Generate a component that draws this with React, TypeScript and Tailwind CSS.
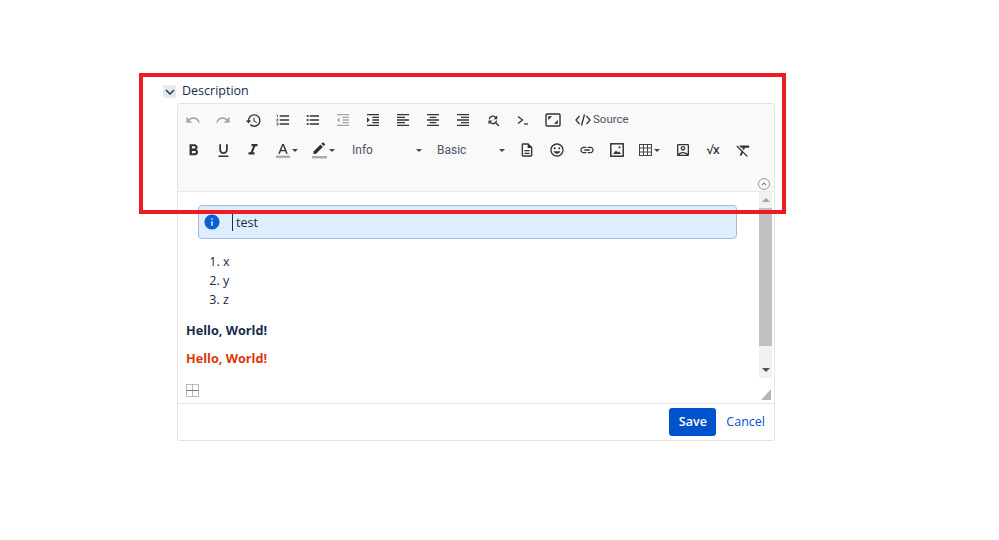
import type { ReactNode } from "react";
import {
  MdUndo, MdRedo, MdHistory, MdFormatListNumbered, MdFormatListBulleted, MdFormatIndentDecrease,
  MdFormatIndentIncrease, MdFormatAlignLeft, MdFormatAlignCenter, MdFormatAlignRight, MdFindReplace,
  MdFormatBold, MdFormatUnderlined, MdFormatItalic, MdOutlineInsertEmoticon, MdLink, MdFormatClear,
  MdInfo, MdExpandMore, MdOutlineAccountBox, MdOutlineDescription, MdKeyboardArrowUp,
} from "react-icons/md";

function Btn({ children, className = "" }: { children: ReactNode; className?: string }) {
  return <div className={"flex h-[30px] w-[30px] shrink-0 items-center justify-center text-[#333333] " + className}>{children}</div>;
}

function Caret({ className = "" }: { className?: string }) {
  return <span className={"inline-block h-0 w-0 border-x-[3px] border-t-[3px] border-x-transparent border-t-[#444444] " + className} />;
}

function Terminal() {
  return (
    <svg width="14" height="14" viewBox="0 0 14 14" fill="none" stroke="#333" strokeWidth="1.3">
      <path d="M2 3.5 L6.5 7 L2 10.5" />
      <path d="M8 11 H12" />
    </svg>
  );
}

function Maximize() {
  return (
    <svg width="16" height="14" viewBox="0 0 16 14" fill="none" stroke="#333">
      <rect x="1" y="1" width="14" height="12" rx="1" strokeWidth="1.4" />
      <path d="M3.5 6.5 V3.5 H6.5 Z" fill="#333" strokeWidth="0.6" />
      <path d="M12.5 7.5 V10.5 H9.5 Z" fill="#333" strokeWidth="0.6" />
    </svg>
  );
}

function SourceIcon() {
  return (
    <svg width="16" height="14" viewBox="0 0 16 14" fill="none" stroke="#333" strokeWidth="1.3">
      <path d="M4.5 3 L1 7 L4.5 11" />
      <path d="M11.5 3 L15 7 L11.5 11" />
      <path d="M9.5 1.5 L6.5 12.5" />
    </svg>
  );
}

function ColorA() {
  return (
    <svg width="15" height="17" viewBox="0 0 15 17">
      <path d="M6.6 1.5 H8.4 L12.6 12 H10.8 L9.9 9.4 H5.1 L4.2 12 H2.4 Z M5.7 7.9 H9.3 L7.5 3.2 Z" fill="#333" fillRule="evenodd" />
      <rect x="0" y="14" width="15" height="2.4" fill="#a9a9a9" />
    </svg>
  );
}

function Pen() {
  return (
    <svg width="15" height="17" viewBox="0 0 15 17">
      <path d="M1.5 12 V9.6 L8.5 2.6 L10.9 5 L3.9 12 Z" fill="#333" />
      <path d="M9.4 1.7 L10.5 0.6 C10.8 0.3 11.2 0.3 11.5 0.6 L12.9 2 C13.2 2.3 13.2 2.7 12.9 3 L11.8 4.1 Z" fill="#333" />
      <rect x="0" y="14" width="15" height="2.4" fill="#a9a9a9" />
    </svg>
  );
}

function ImageBox() {
  return (
    <svg width="14" height="14" viewBox="0 0 14 14">
      <rect x="0.8" y="0.8" width="12.4" height="12.4" fill="none" stroke="#333" strokeWidth="1.5" />
      <path d="M3 11 L6 7.5 L7.8 9.5 L9 8.2 L11 11 Z" fill="#333" />
      <rect x="8.6" y="3.4" width="1.8" height="1.8" fill="#333" />
    </svg>
  );
}

function TableIcon() {
  return (
    <svg width="13" height="12" viewBox="0 0 13 12" fill="none" stroke="#444" strokeWidth="1">
      <rect x="0.5" y="0.5" width="12" height="11" />
      <path d="M0.5 4 H12.5 M0.5 8 H12.5 M4.5 0.5 V11.5 M8.5 0.5 V11.5" />
    </svg>
  );
}

function DottedTable() {
  return (
    <svg width="13" height="13" viewBox="0 0 13 13" fill="none" stroke="#777777" strokeWidth="1">
      <rect x="0.5" y="0.5" width="12" height="12" strokeDasharray="1 1" />
      <path d="M0.5 6.5 H12.5" />
      <path d="M6.5 0.5 V12.5" strokeDasharray="1 1" />
    </svg>
  );
}

const muted = "text-[#a8a8a8]";
const size = 16;
const label = "font-['Roboto',sans-serif] text-[12px] text-[#4a5568]";

export default function App() {
  return (
    <div className="relative h-[540px] w-[999px] overflow-hidden bg-white pl-[163px] pt-[80px] font-['Open_Sans','Noto_Sans',sans-serif] text-[12.5px] text-[#172b4d]">
      <div className="flex h-[23px] items-center">
        <span className="flex h-[13px] w-[13px] items-center justify-center rounded-[2px] bg-[#e6e8ef]">
          <MdExpandMore size={18} className="shrink-0 text-[#253858]" />
        </span>
        <span className="ml-[6px] text-[12.5px] font-medium leading-none">Description</span>
      </div>

      <div className="ml-[14px] w-[598px] rounded-[2px] border border-[#e4e5e8] bg-white">
        <div className="h-[88px] border-b border-[#e9e9e9] bg-[#f9f9f9] pt-[1px]">
          <div className="flex h-[30px] items-center">
            <Btn className={muted}><MdUndo size={size} /></Btn>
            <Btn className={muted}><MdRedo size={size} /></Btn>
            <Btn><MdHistory size={17} /></Btn>
            <Btn><MdFormatListNumbered size={size} /></Btn>
            <Btn><MdFormatListBulleted size={size} /></Btn>
            <Btn className={muted}><MdFormatIndentDecrease size={size} /></Btn>
            <Btn><MdFormatIndentIncrease size={size} /></Btn>
            <Btn><MdFormatAlignLeft size={size} /></Btn>
            <Btn><MdFormatAlignCenter size={size} /></Btn>
            <Btn><MdFormatAlignRight size={size} /></Btn>
            <Btn><MdFindReplace size={15} /></Btn>
            <Btn><Terminal /></Btn>
            <Btn><Maximize /></Btn>
            <div className={"ml-[7px] flex items-center gap-[2px] " + label}>
              <SourceIcon />
              <span className="text-[11.5px]">Source</span>
            </div>
          </div>
          <div className="flex h-[30px] items-center">
            <Btn><MdFormatBold size={19} /></Btn>
            <Btn><MdFormatUnderlined size={17} /></Btn>
            <Btn><MdFormatItalic size={18} /></Btn>
            <div className="flex w-[30px] shrink-0 items-center pl-[8px]"><ColorA /><Caret className="ml-[2px]" /></div>
            <div className="ml-[14px] flex w-[30px] shrink-0 items-center"><Pen /><Caret className="ml-[2px]" /></div>
            <div className={"ml-[10px] flex w-[72px] shrink-0 items-center justify-between pr-[2px] " + label}>
              <span>Info</span><Caret />
            </div>
            <div className={"ml-[13px] flex w-[70px] shrink-0 items-center justify-between pr-[2px] " + label}>
              <span>Basic</span><Caret />
            </div>
            <Btn className="ml-[5px]"><MdOutlineDescription size={16} /></Btn>
            <Btn><MdOutlineInsertEmoticon size={16} /></Btn>
            <Btn><MdLink size={16} /></Btn>
            <Btn><ImageBox /></Btn>
            <div className="flex w-[30px] shrink-0 items-center pl-[7px]"><TableIcon /><Caret className="ml-[2px]" /></div>
            <Btn className="ml-[6px]"><MdOutlineAccountBox size={16} /></Btn>
            <Btn><span className="text-[12px] font-semibold leading-none text-[#333333]">√x</span></Btn>
            <Btn><MdFormatClear size={17} /></Btn>
          </div>
          <div className="flex justify-end pr-[4px] pt-[13px]">
            <span className="flex h-[12px] w-[12px] items-center justify-center rounded-full border border-[#999999] text-[#777777]">
              <MdKeyboardArrowUp size={10} />
            </span>
          </div>
        </div>

        <div className="flex h-[186px]">
          <div className="min-w-0 flex-1 pt-[13px]">
            <div className="ml-[20px] flex h-[34px] w-[539px] items-center rounded-[4px] border border-[#a4bcd6] bg-[#dfeeff] pl-[4px]">
              <MdInfo size={18} className="text-[#0b5fd0]" />
              <span className="ml-[11px] h-[17px] w-px bg-[#172b4d]" />
              <span className="ml-[3px] leading-[17px]">test</span>
            </div>
            <ol className="ml-[45px] mt-[13px] list-decimal pl-0 leading-[19px]">
              <li>x</li>
              <li>y</li>
              <li>z</li>
            </ol>
            <p className="ml-[8px] mt-[12px] text-[12.7px] font-bold leading-[19px]">Hello, World!</p>
            <p className="ml-[8px] mt-[9px] text-[12.7px] font-bold leading-[19px] text-[#de350b]">Hello, World!</p>
          </div>
          <div className="mr-[2px] flex w-[13px] shrink-0 flex-col bg-[#f1f1f1]">
            <div className="flex h-[16px] items-center justify-center">
              <span className="h-0 w-0 border-x-[4px] border-b-[4px] border-x-transparent border-b-[#a3a3a3]" />
            </div>
            <div className="h-[138px] bg-[#c1c1c1]" />
            <div className="flex-1" />
            <div className="flex h-[16px] items-center justify-center">
              <span className="h-0 w-0 border-x-[4px] border-t-[4px] border-x-transparent border-t-[#505050]" />
            </div>
          </div>
        </div>

        <div className="flex h-[26px] items-start justify-between border-b border-[#e4e5e8] pl-[8px] pr-[3px] pt-[6px]">
          <DottedTable />
          <svg width="10" height="11" viewBox="0 0 10 11" className="mt-[5px]"><path d="M10 0 V11 H0 Z" fill="#b5b5b5" /></svg>
        </div>

        <div className="flex h-[36px] items-center justify-end pr-[9px]">
          <button className="h-[28px] w-[47px] rounded-[3px] bg-[#0052cc] text-[12.5px] font-semibold text-white">Save</button>
          <span className="ml-[10px] text-[12.5px] text-[#0052cc]">Cancel</span>
        </div>
      </div>

      <div className="pointer-events-none absolute left-[139px] top-[73px] h-[141px] w-[647px] border-[4px] border-[#ed1c24]" />
    </div>
  );
}
